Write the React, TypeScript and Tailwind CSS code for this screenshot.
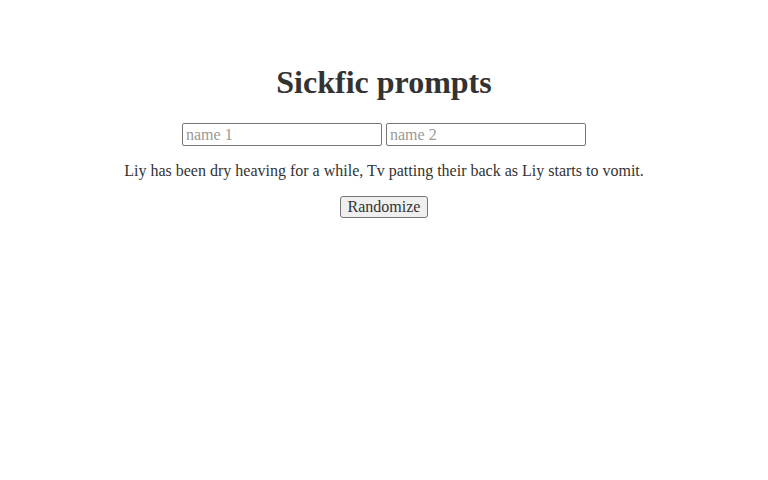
export default function App() {
  return (
    <div className="min-h-screen bg-white text-center text-[#333] font-['Liberation_Serif',serif] pt-[64px]">
      <h1 className="text-[32px] font-bold leading-[37px]">Sickfic prompts</h1>
      <div className="mt-[22px] flex justify-center gap-[4px]">
        <input
          placeholder="name 1"
          className="w-[200px] h-[23px] border border-[#767676] rounded-[2px] px-[3px] text-[16px] leading-[18px] placeholder:text-[#999] font-['Liberation_Serif',serif]"
        />
        <input
          placeholder="name 2"
          className="w-[200px] h-[23px] border border-[#767676] rounded-[2px] px-[3px] text-[16px] leading-[18px] placeholder:text-[#999] font-['Liberation_Serif',serif]"
        />
      </div>
      <p className="mt-[16px] text-[16px] leading-[18px]">
        Liy has been dry heaving for a while, Tv patting their back as Liy starts to vomit.
      </p>
      <div className="mt-[16px] flex justify-center">
        <button className="h-[22px] px-[7px] bg-[#efefef] border border-[#767676] rounded-[3px] text-[16px] leading-[18px] text-[#333]">
          Randomize
        </button>
      </div>
    </div>
  )
}
